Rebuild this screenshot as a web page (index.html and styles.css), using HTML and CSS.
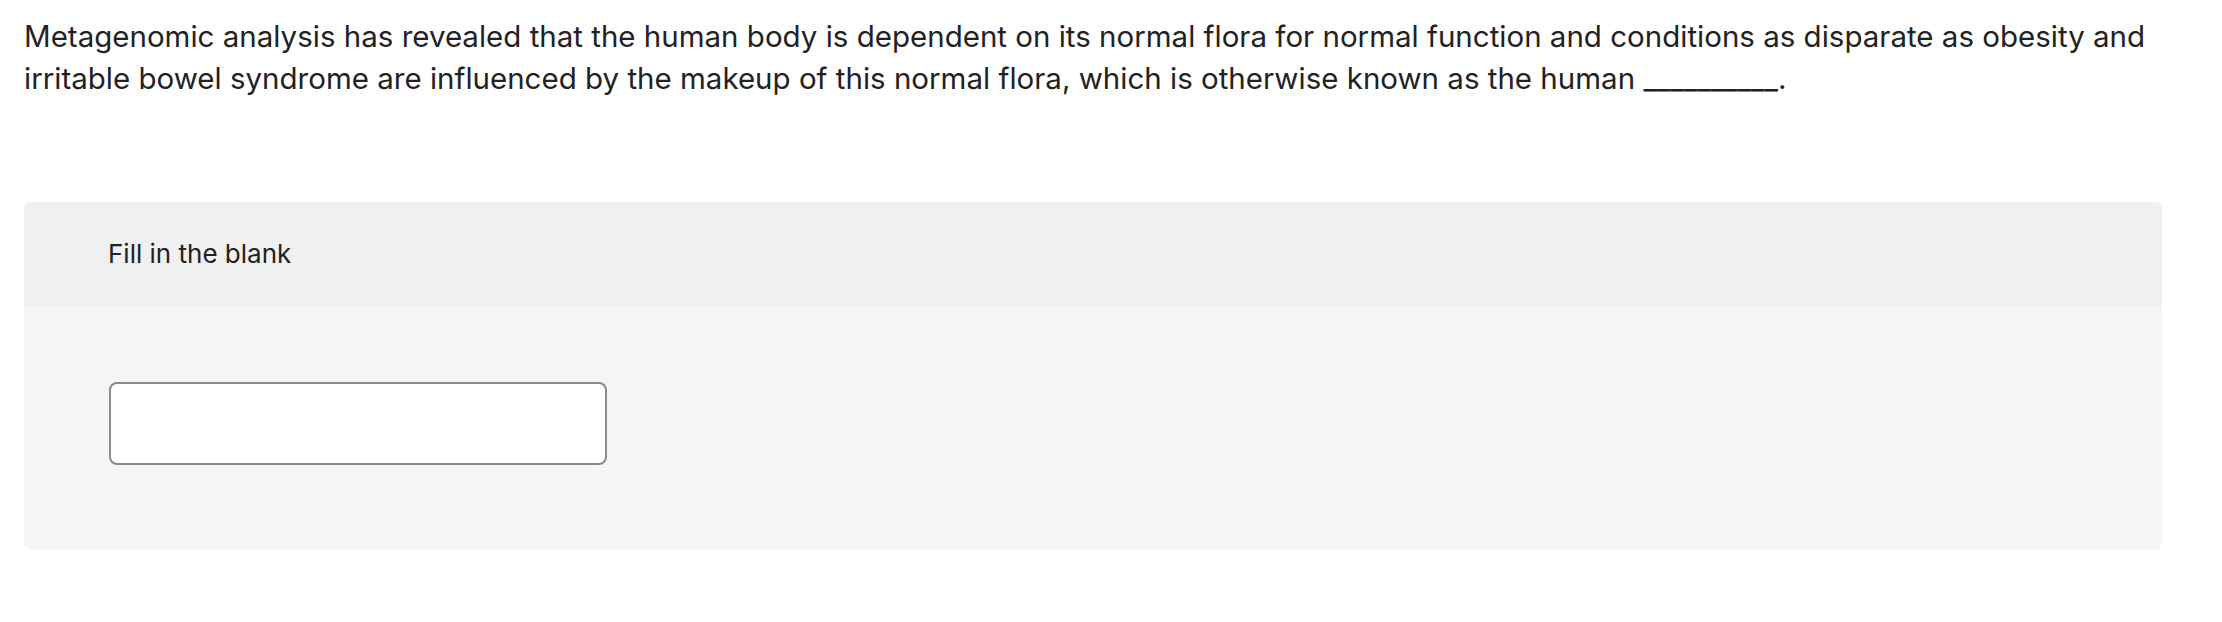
FILE: index.html
```html
<!DOCTYPE html>
<html lang="en">
<head>
<meta charset="utf-8">
<title>Fill in the blank</title>
<link rel="stylesheet" href="styles.css">
</head>
<body>
<div class="page">
  <p class="prompt">Metagenomic analysis has revealed that the human body is dependent on its normal flora for normal function and conditions as disparate as obesity and irritable bowel syndrome are influenced by the makeup of this normal flora, which is otherwise known as the human __________.</p>
  <section class="card">
    <div class="card-head">Fill in the blank</div>
    <div class="card-body">
      <input class="answer" type="text" aria-label="Answer">
    </div>
  </section>
</div>
</body>
</html>
```

FILE: styles.css
```css
html, body {
  margin: 0;
  padding: 0;
  background: #ffffff;
}
body {
  font-family: "Inter", "Liberation Sans", sans-serif;
  color: #222222;
}
.page {
  padding: 15px 60px 0 24px;
}
.prompt {
  margin: 0;
  font-size: 29.5px;
  line-height: 42px;
}
.card {
  margin-top: 103px;
  border-radius: 6px;
  overflow: hidden;
  background: #f5f5f5;
}
.card-head {
  background: #f0f0f0;
  height: 104px;
  box-sizing: border-box;
  padding: 36px 0 0 84px;
  font-size: 26px;
  line-height: 32px;
}
.card-body {
  height: 243px;
  box-sizing: border-box;
  padding: 76px 0 0 85px;
}
.answer {
  display: block;
  width: 498px;
  height: 83px;
  box-sizing: border-box;
  border: 2px solid #8a8a8a;
  border-radius: 8px;
  background: #ffffff;
  margin: 0;
  padding: 0 14px;
  font: inherit;
  font-size: 27px;
}
```
